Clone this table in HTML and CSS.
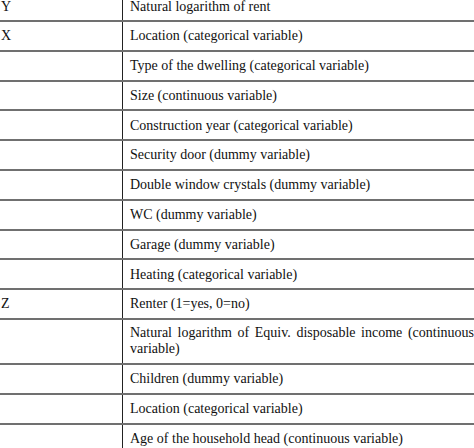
FILE: index.html
```html
<!DOCTYPE html>
<html>
<head>
<meta charset="utf-8">
<link rel="stylesheet" href="styles.css">
</head>
<body>
<div class="table">
  <div class="row first"><div class="key">Y</div><div class="val">Natural logarithm of rent</div></div>
  <div class="row"><div class="key">X</div><div class="val">Location (categorical variable)</div></div>
  <div class="row"><div class="key"></div><div class="val">Type of the dwelling (categorical variable)</div></div>
  <div class="row"><div class="key"></div><div class="val">Size (continuous variable)</div></div>
  <div class="row"><div class="key"></div><div class="val">Construction year (categorical variable)</div></div>
  <div class="row"><div class="key"></div><div class="val">Security door (dummy variable)</div></div>
  <div class="row"><div class="key"></div><div class="val">Double window crystals (dummy variable)</div></div>
  <div class="row"><div class="key"></div><div class="val">WC (dummy variable)</div></div>
  <div class="row"><div class="key"></div><div class="val">Garage (dummy variable)</div></div>
  <div class="row"><div class="key"></div><div class="val">Heating (categorical variable)</div></div>
  <div class="row"><div class="key">Z</div><div class="val">Renter (1=yes, 0=no)</div></div>
  <div class="row tall"><div class="key"></div><div class="val">Natural logarithm of Equiv. disposable income (continuous variable)</div></div>
  <div class="row"><div class="key"></div><div class="val">Children (dummy variable)</div></div>
  <div class="row"><div class="key"></div><div class="val">Location (categorical variable)</div></div>
  <div class="row"><div class="key"></div><div class="val">Age of the household head (continuous variable)</div></div>
</div>
</body>
</html>
```
FILE: styles.css
```css
html, body {
  margin: 0;
  padding: 0;
  background: #ffffff;
  overflow: hidden;
}
body {
  width: 474px;
  height: 448px;
  font-family: "Liberation Serif", "Times New Roman", serif;
  font-size: 14px;
  color: #111111;
}
.table {
  width: 474px;
}
.row {
  display: grid;
  grid-template-columns: 123px 1fr;
  height: 29.8px;
  box-sizing: border-box;
  border-bottom: 2px solid #707070;
}
.row.first {
  height: 22px;
}
.row.tall {
  height: 45px;
}
.key {
  border-right: 1px solid #222222;
  display: flex;
  align-items: center;
  padding-left: 1px;
  padding-top: 1px;
  line-height: 16.5px;
}
.val {
  display: flex;
  align-items: center;
  padding-left: 7px;
  padding-top: 1px;
  line-height: 16.5px;
  text-align: justify;
}
.first .key,
.first .val {
  line-height: 14px;
  padding-top: 0;
  padding-bottom: 6px;
}
.tall .val {
  display: block;
  padding-top: 5px;
}
```
